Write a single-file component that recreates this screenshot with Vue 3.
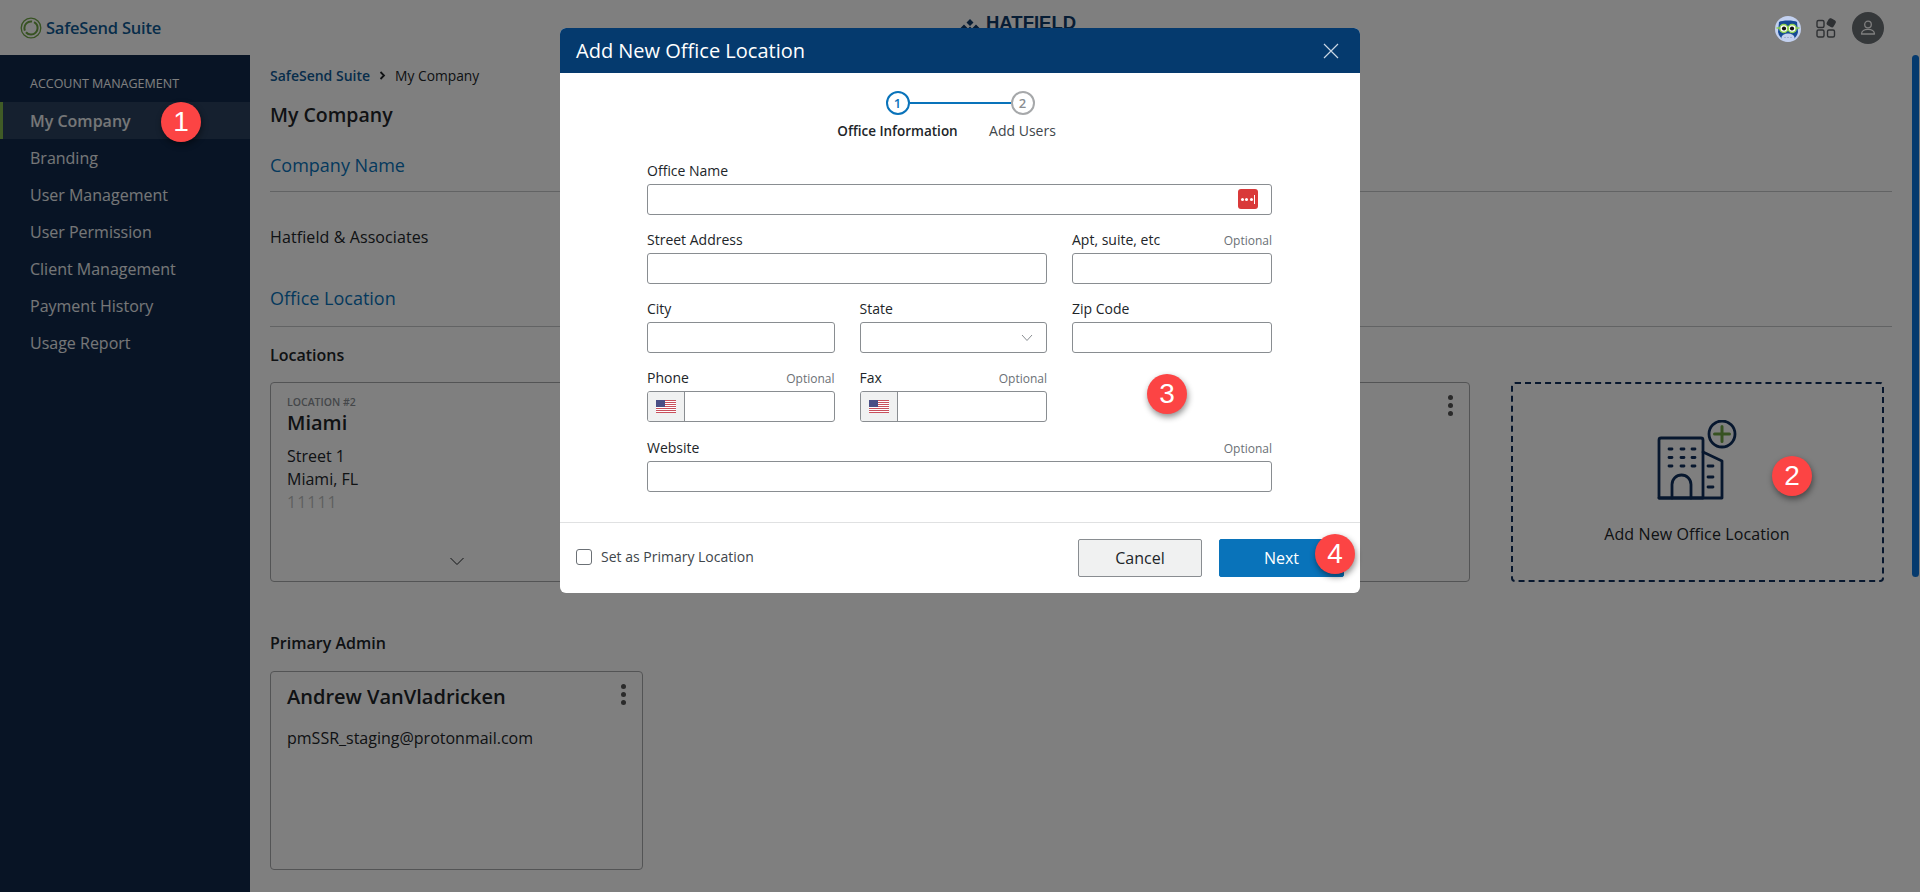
<template>
  <div class="page">
    <!-- top bar -->
    <header class="topbar">
      <div class="brand">
        <svg class="brand-mark" width="22" height="22" viewBox="0 0 22 22" fill="none">
          <circle cx="11" cy="11" r="9.8" stroke="#6fa544" stroke-width="1.3" />
          <circle cx="11" cy="11" r="6.6" stroke="#6fa544" stroke-width="2" stroke-dasharray="16 2 14 2" />
        </svg>
        <span class="brand-name">SafeSend Suite</span>
      </div>
      <div class="firm">
        <svg width="20" height="14" viewBox="0 0 20 14" fill="#0e3a6b">
          <path d="M10 0l3.500 3.500L10 7 6.500 3.500zM4 5.500l3.500 3.500L4 12.500.5 9zM16 5.500l3.500 3.500-3.500 3.500L12.500 9zM10 7.500l3.500 3.500-3 3h-1l-3-3z" />
        </svg>
        <span class="firm-name">HATFIELD</span>
      </div>
      <div class="top-actions">
        <svg class="owl" width="26" height="26" viewBox="0 0 26 26">
          <circle cx="13" cy="13" r="13" fill="#c3d1f0" />
          <path d="M4 6c3-2 15-2 18 0l1 10c-1 6-6 8.500-10 8.500S4 22 3 16z" fill="#164a94" />
          <ellipse cx="13" cy="21.500" rx="6.500" ry="4" fill="#c3d1f0" />
          <path d="M9.500 21.500h1M12.500 21.500h1M15.500 21.500h1" stroke="#7f8fb5" stroke-width="1" />
          <path d="M1.500 12h3M21.500 12h3" stroke="#8fd14f" stroke-width="1.300" />
          <circle cx="8.800" cy="12.500" r="4" fill="#fff" stroke="#8fd14f" stroke-width="1.500" />
          <circle cx="17.200" cy="12.500" r="4" fill="#fff" stroke="#8fd14f" stroke-width="1.500" />
          <circle cx="9" cy="12.500" r="2.100" fill="#111" />
          <circle cx="17" cy="12.500" r="2.100" fill="#111" />
        </svg>
        <svg class="apps" width="20" height="20" viewBox="0 0 20 20" fill="none" stroke="#5c6166" stroke-width="1.400">
          <rect x="1" y="2.500" width="7" height="7" rx="1.500" />
          <rect x="1" y="12" width="7" height="7" rx="1.500" />
          <rect x="11.500" y="12" width="7" height="7" rx="1.500" />
          <rect x="12" y="1.500" width="6.500" height="6.500" rx="1.500" fill="#5c6166" transform="rotate(30 15.200 4.700)" />
        </svg>
        <div class="avatar">
          <svg width="18" height="18" viewBox="0 0 18 18" fill="none" stroke="#fff" stroke-width="1.300">
            <circle cx="9" cy="5.500" r="3.300" />
            <path d="M2.500 15c0-3 3-4.700 6.500-4.700s6.500 1.700 6.500 4.700z" stroke-linejoin="round" />
          </svg>
        </div>
      </div>
    </header>

    <div class="body">
      <aside class="sidebar">
        <div class="side-title">ACCOUNT MANAGEMENT</div>
        <a
          v-for="item in menu"
          :key="item"
          class="side-item"
          :class="{ active: item === 'My Company' }"
        >{{ item }}</a>
      </aside>

      <main class="content">
        <div class="crumbs">
          <span class="crumb-link">SafeSend Suite</span>
          <svg width="7" height="9" viewBox="0 0 7 9" fill="none" stroke="#212529" stroke-width="1.800"><path d="M1.500 1l3.500 3.500L1.500 8" /></svg>
          <span>My Company</span>
        </div>
        <h1 class="page-title">My Company</h1>

        <h2 class="section-title">Company Name</h2>
        <div class="company">Hatfield &amp; Associates</div>

        <h2 class="section-title office-title">Office Location</h2>
        <div class="sub-title locations-title">Locations</div>
        <div class="cards">
          <div v-for="loc in locations" :key="loc.no" class="card">
            <template v-if="loc.city">
              <div class="card-no">LOCATION #{{ loc.no }}</div>
              <div class="card-name">{{ loc.city }}</div>
              <div class="card-line">{{ loc.street }}</div>
              <div class="card-line">{{ loc.region }}</div>
              <div class="card-line faded">{{ loc.zip }}</div>
              <svg class="card-chevron" width="16" height="9" viewBox="0 0 16 9" fill="none" stroke="#212529"><path d="M1.500 1L8 7.500 14.500 1" /></svg>
            </template>
            <div class="kebab"><i /><i /><i /></div>
          </div>
          <div class="card add-card">
            <svg width="80" height="80" viewBox="0 0 80 80" fill="none" stroke="#0f2f5c" stroke-width="2.800" stroke-linejoin="round" stroke-linecap="round">
              <path d="M2 78V20a2 2 0 0 1 2-2h40a2 2 0 0 1 2 2v58z" />
              <path d="M46 32l19 9v37H46M2 78h63" />
              <path d="M15 78V64.500a9.500 9.500 0 0 1 19 0V78" />
              <path d="M12 29h3M24 29h3M35 29h3M12 37.500h3M24 37.500h3M35 37.500h3M12 46h3M24 46h3M35 46h3M51 46h5M51 57h5M51 67h5" />
              <circle cx="65" cy="14" r="13" fill="#fff" />
              <path d="M65 6.500v15M57.500 14h15" stroke="#6fa544" stroke-width="3" />
            </svg>
            <span class="add-label">Add New Office Location</span>
          </div>
        </div>

        <div class="sub-title admin-title">Primary Admin</div>
        <div class="card admin-card">
          <div class="card-name">Andrew VanVladricken</div>
          <div class="admin-mail">pmSSR_staging@protonmail.com</div>
          <div class="kebab"><i /><i /><i /></div>
        </div>
      </main>
    </div>

    <!-- dimmed layer with the dialog -->
    <div class="overlay">
      <div class="modal">
        <div class="modal-head">
          <span>Add New Office Location</span>
          <svg width="16" height="16" viewBox="0 0 16 16" fill="none" stroke="#c9d6e4" stroke-width="1.200"><path d="M1 1l14 14M15 1L1 15" /></svg>
        </div>

        <div class="stepper">
          <div class="step current">
            <div class="step-dot">1</div>
            <div class="step-label">Office Information</div>
          </div>
          <div class="step">
            <div class="step-dot">2</div>
            <div class="step-label">Add Users</div>
          </div>
        </div>

        <form class="form">
          <div class="field span-3">
            <div class="field-head"><label>Office Name</label></div>
            <div class="box">
              <span class="lastpass"><i /><i /><i /><b /></span>
            </div>
          </div>
          <div class="field span-2">
            <div class="field-head"><label>Street Address</label></div>
            <div class="box" />
          </div>
          <div class="field">
            <div class="field-head"><label>Apt, suite, etc</label><small>Optional</small></div>
            <div class="box" />
          </div>
          <div class="field">
            <div class="field-head"><label>City</label></div>
            <div class="box" />
          </div>
          <div class="field">
            <div class="field-head"><label>State</label></div>
            <div class="box">
              <svg class="select-arrow" width="12" height="8" viewBox="0 0 12 8" fill="none" stroke="#898d91"><path d="M1 1l5 5.500L11 1" /></svg>
            </div>
          </div>
          <div class="field">
            <div class="field-head"><label>Zip Code</label></div>
            <div class="box" />
          </div>
          <div v-for="name in ['Phone', 'Fax']" :key="name" class="field">
            <div class="field-head"><label>{{ name }}</label><small>Optional</small></div>
            <div class="box">
              <div class="flag-cell">
                <svg width="20" height="13" viewBox="0 0 20 13">
                  <rect width="20" height="13" fill="#fff" />
                  <path v-for="y in [0, 2, 4, 6, 8, 10, 12]" :key="y" :d="`M0 ${y}h20v1H0z`" fill="#c8505c" />
                  <rect width="9" height="7" fill="#4a4f86" />
                </svg>
              </div>
            </div>
          </div>
          <div class="field span-3 website">
            <div class="field-head"><label>Website</label><small>Optional</small></div>
            <div class="box" />
          </div>
        </form>

        <div class="modal-foot">
          <label class="check"><span class="check-box" />Set as Primary Location</label>
          <div class="foot-buttons">
            <button type="button" class="btn cancel">Cancel</button>
            <button type="button" class="btn primary">Next</button>
          </div>
        </div>
      </div>
    </div>

    <div class="scroll-thumb" />

    <!-- numbered callouts drawn over the shot -->
    <span v-for="b in badges" :key="b.n" class="badge" :class="'badge-' + b.n">{{ b.n }}</span>
  </div>
</template>

<script setup>
const menu = [
  'My Company',
  'Branding',
  'User Management',
  'User Permission',
  'Client Management',
  'Payment History',
  'Usage Report'
]

// only the first card shows from behind the dialog
const locations = [
  { no: 2, city: 'Miami', street: 'Street 1', region: 'Miami, FL', zip: '11111' },
  { no: 3 },
  { no: 4 }
]

const badges = [{ n: 1 }, { n: 2 }, { n: 3 }, { n: 4 }]
</script>

<style>
html, body {
  margin: 0;
  height: 100%;
  overflow: hidden;
}
</style>

<style scoped>
.page {
  position: relative;
  width: 1920px;
  height: 892px;
  overflow: hidden;
  background: #fff;
  color: #212529;
  font-family: "Open Sans", "Noto Sans", sans-serif;
  font-size: 16px;
}

.topbar {
  position: relative;
  height: 55px;
  display: flex;
  align-items: center;
  padding: 0 36px 0 20px;
  box-sizing: border-box;
}

.brand {
  display: flex;
  align-items: center;
  gap: 4px;
}

.brand-name {
  font-size: 16.500px;
  font-weight: 600;
  letter-spacing: -0.2px;
  color: #0f5a94;
}

.firm {
  position: absolute;
  left: 960px;
  top: 12px;
  display: flex;
  align-items: center;
  gap: 6px;
}

.firm svg {
  margin-top: 6px;
}

.firm-name {
  font-family: "Liberation Sans", sans-serif;
  font-size: 18.500px;
  font-weight: 700;
  color: #0e3a6b;
}

.top-actions {
  margin-left: auto;
  display: flex;
  align-items: center;
}

/* the owl sits above the dimming layer in the shot */
.owl {
  position: relative;
  z-index: 2;
  margin-top: 3px;
}

.apps {
  margin-left: 15px;
}

.avatar {
  margin-left: 16px;
  width: 32px;
  height: 32px;
  border-radius: 50%;
  background: #6b7075;
  display: flex;
  align-items: center;
  justify-content: center;
}

.body {
  display: flex;
  height: 837px;
}

.sidebar {
  width: 250px;
  flex: none;
  padding-top: 20px;
  box-sizing: border-box;
  background: #10294b;
}

.side-title {
  padding-left: 30px;
  height: 27px;
  font-size: 12.500px;
  color: #fff;
  line-height: 18px;
}

.side-item {
  display: block;
  height: 37px;
  line-height: 38px;
  padding-left: 30px;
  font-size: 16px;
  color: #fff;
  opacity: 0.92;
}

.side-item.active {
  padding-left: 27px;
  border-left: 3px solid #8ac44d;
  background: rgba(255, 255, 255, 0.12);
  font-weight: 600;
}

.content {
  flex: 1;
  padding: 9px 28px 0 20px;
  min-width: 0;
}

.crumbs {
  display: flex;
  align-items: center;
  gap: 9px;
  height: 22px;
  font-size: 13.800px;
}

.crumb-link {
  color: #0e5a96;
  font-weight: 600;
  font-size: 14px;
}

.page-title {
  margin: 15px 0 0;
  font-size: 19.500px;
  line-height: 28px;
  font-weight: 600;
}

.section-title {
  margin: 0;
  padding: 0 0 13px;
  font-size: 18px;
  line-height: 26px;
  font-weight: 400;
  color: #0973ba;
  border-bottom: 1px solid #c4c6c8;
}

.page-title + .section-title {
  margin-top: 23px;
}

.office-title {
  padding-bottom: 15px;
}

.company {
  height: 93px;
  line-height: 90px;
  font-size: 16px;
  letter-spacing: 0.1px;
}

.sub-title {
  font-size: 16px;
  line-height: 22px;
  font-weight: 600;
}

.locations-title {
  margin-top: 17px;
}

.cards {
  margin-top: 16px;
  display: grid;
  grid-template-columns: repeat(4, 373px);
  column-gap: 40.500px;
}

.card {
  position: relative;
  height: 200px;
  padding: 10px 16px;
  box-sizing: border-box;
  border: 1px solid #a6a8aa;
  border-radius: 4px;
}

.card-no {
  font-size: 10.500px;
  line-height: 18px;
  font-weight: 600;
  color: #8a8f94;
}

.card-name {
  font-size: 20px;
  line-height: 24px;
  font-weight: 600;
}

.card-line {
  font-size: 16px;
  line-height: 23px;
}

.card-name + .card-line {
  margin-top: 10px;
}

.card-line.faded {
  opacity: 0.3;
  letter-spacing: 1px;
}

.card-chevron {
  position: absolute;
  left: 178px;
  bottom: 15px;
}

.kebab {
  position: absolute;
  top: 12px;
  right: 16px;
  display: flex;
  flex-direction: column;
  gap: 3px;
}

.kebab i {
  width: 5px;
  height: 5px;
  border-radius: 50%;
  background: #555;
}

.add-card {
  display: flex;
  flex-direction: column;
  align-items: center;
  padding: 36px 0 0;
  border: 2px dashed #0f2f5c;
}

.add-label {
  margin-top: 23px;
  font-size: 16px;
  letter-spacing: 0.1px;
  line-height: 22px;
}

.admin-title {
  margin-top: 50px;
}

.admin-card {
  margin-top: 17px;
  width: 373px;
  height: 199px;
  padding-top: 13px;
}

.admin-mail {
  margin-top: 18px;
  font-size: 16px;
  line-height: 22px;
}

.overlay {
  position: absolute;
  inset: 0;
  display: flex;
  justify-content: center;
  padding-top: 28px;
  box-sizing: border-box;
  background: rgba(0, 0, 0, 0.5);
}

.modal {
  width: 800px;
  height: 565px;
  display: flex;
  flex-direction: column;
  border-radius: 6px;
  overflow: hidden;
  background: #fff;
}

.modal-head {
  height: 45px;
  flex: none;
  display: flex;
  align-items: center;
  justify-content: space-between;
  padding: 0 21px 0 16px;
  background: #053a6e;
  color: #fff;
  font-size: 20px;
}

.stepper {
  margin-top: 18px;
  display: flex;
  justify-content: center;
}

.step {
  position: relative;
  width: 125px;
  display: flex;
  flex-direction: column;
  align-items: center;
}

.step-dot {
  width: 24px;
  height: 24px;
  box-sizing: border-box;
  border: 2px solid #a6a8aa;
  border-radius: 50%;
  color: #898d91;
  background: #fff;
  font-size: 13px;
  font-weight: 600;
  line-height: 20px;
  text-align: center;
}

.step-label {
  margin-top: 6px;
  font-size: 14px;
  line-height: 20px;
  white-space: nowrap;
  color: #40464b;
}

.step.current .step-dot {
  border-color: #0973ba;
  color: #0973ba;
}

.step.current .step-label {
  font-size: 13.500px;
  font-weight: 600;
  color: #212529;
}

.step.current::after {
  content: "";
  position: absolute;
  top: 11px;
  left: calc(50% + 12px);
  width: 101px;
  height: 2px;
  background: #0973ba;
}

.form {
  margin: 19px 88px 0 87px;
  display: grid;
  grid-template-columns: 187.500px 187.500px 200px;
  column-gap: 25px;
  row-gap: 14px;
}

.span-2 {
  grid-column: span 2;
}

.span-3 {
  grid-column: span 3;
}

.website {
  margin-top: 1px;
}

.field-head {
  height: 24px;
  display: flex;
  align-items: baseline;
  justify-content: space-between;
  font-size: 14px;
  line-height: 22px;
}

.field-head small {
  font-size: 12px;
  color: #6b7075;
}

.box {
  position: relative;
  height: 31px;
  box-sizing: border-box;
  display: flex;
  align-items: center;
  border: 1px solid #898d91;
  border-radius: 3px;
  overflow: hidden;
}

.lastpass {
  position: absolute;
  right: 13px;
  top: 4px;
  width: 20px;
  height: 20px;
  border-radius: 3px;
  background: #d93a3a;
  display: flex;
  align-items: center;
  justify-content: center;
  gap: 1.500px;
}

.lastpass i {
  width: 3px;
  height: 3px;
  border-radius: 50%;
  background: #fff;
}

.lastpass b {
  width: 1px;
  height: 9px;
  background: #fff;
}

.select-arrow {
  position: absolute;
  right: 13px;
  top: 11px;
}

.flag-cell {
  width: 36px;
  height: 100%;
  display: flex;
  align-items: center;
  justify-content: center;
  background: #f0f1f1;
  border-right: 1px solid #898d91;
}

.modal-foot {
  margin-top: auto;
  height: 71px;
  flex: none;
  display: flex;
  align-items: center;
  justify-content: space-between;
  box-sizing: border-box;
  padding: 0 16px;
  border-top: 1px solid #e0e1e2;
}

.check {
  display: flex;
  align-items: center;
  gap: 9px;
  margin-top: -3px;
  font-size: 14px;
  color: #40464b;
}

.check-box {
  width: 16px;
  height: 16px;
  box-sizing: border-box;
  border: 1px solid #6b7075;
  border-radius: 3px;
}

.foot-buttons {
  display: flex;
  gap: 17px;
}

.btn {
  width: 125px;
  height: 38px;
  box-sizing: border-box;
  border: 1px solid #898d91;
  border-radius: 2px;
  background: #f0f1f1;
  color: #212529;
  font-family: inherit;
  font-size: 16px;
}

.btn.cancel {
  width: 124px;
}

.btn.primary {
  border-color: #0973ba;
  background: #0973ba;
  color: #fff;
}

.scroll-thumb {
  position: absolute;
  right: 1px;
  top: 55px;
  width: 7px;
  height: 522px;
  border-radius: 4px;
  background: #053a6e;
}

.badge {
  position: absolute;
  width: 40px;
  height: 40px;
  border-radius: 50%;
  background: #fc4444;
  color: #fff;
  font-family: "Liberation Sans", sans-serif;
  font-size: 28px;
  line-height: 40px;
  text-align: center;
  box-shadow: 1px 3px 6px rgba(0, 0, 0, 0.45);
}

.badge-1 {
  left: 161px;
  top: 102px;
}

.badge-2 {
  left: 1772px;
  top: 456px;
}

.badge-3 {
  left: 1147px;
  top: 374px;
}

.badge-4 {
  left: 1315px;
  top: 534px;
}
</style>
